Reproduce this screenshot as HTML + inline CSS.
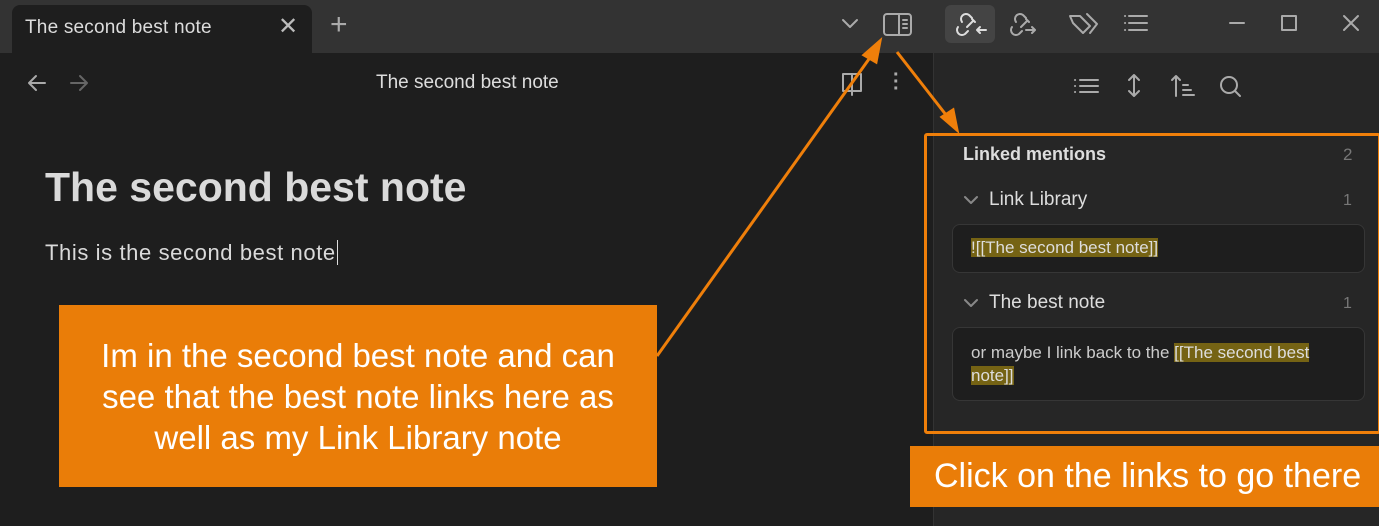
<!DOCTYPE html>
<html><head><style>
body{margin:0;width:1379px;height:526px;background:#1e1e1e;font-family:"Liberation Sans",sans-serif;position:relative;overflow:hidden;color:#dadada}
.a{position:absolute}
</style></head><body>
<div class="a" style="left:0;top:0;width:1379px;height:53px;background:#333"></div>
<div class="a" style="left:933px;top:53px;width:446px;height:473px;background:#262626;border-left:1px solid #333"></div>
<div class="a" style="left:12px;top:5px;width:300px;height:48px;background:#1e1e1e;border-radius:8px 8px 0 0"></div>
<div class="a" style="left:25px;top:17px;font-size:19px;color:#dcdcdc;letter-spacing:0.2px">The second best note</div>
<div class="a" style="left:278px;top:12px;font-size:24px;color:#bbb">✕</div>
<div class="a" style="left:330px;top:8px;font-size:30px;color:#aaa;font-weight:300">+</div>
<div class="a" style="left:945px;top:5px;width:50px;height:38px;background:#444;border-radius:6px"></div>
<svg class="a" style="left:0;top:0" width="1379" height="526" fill="none" stroke="#aaa" stroke-width="2" stroke-linecap="round" stroke-linejoin="round">
<path d="M843 20l7 7 7-7"/>
<rect x="884" y="14" width="27" height="21" rx="3"/><path d="M899 14v21M903 20h4M903 24h4M903 28h4"/>
<g stroke="#ddd"><path d="M962 22a5 5 0 0 1 7-7l3 3M975 22l-3-3M958 27a5 5 0 0 0 7 7l3-3"/><path d="M967 27l6-6M986 30h-9M980 27l-3 3 3 3"/></g>
<path d="M1016 22a5 5 0 0 1 7-7l3 3M1029 22l-3-3M1012 27a5 5 0 0 0 7 7l3-3M1021 27l6-6M1026 30h9M1032 27l3 3-3 3"/>
<path d="M1070 16h10l10 10-7 7-10-10zM1087 14l10 10-7 9"/>
<path d="M1129 16h18M1129 23h18M1129 30h18M1125 16h.1M1125 23h.1M1125 30h.1"/>
<path d="M1230 23h14"/><rect x="1282" y="16" width="14" height="14"/><path d="M1344 16l14 14M1358 16l-14 14"/>
<path d="M45 83H29l7-7M29 83l7 7" /><path d="M71 83h16l-7-7M87 83l-7 7" stroke="#666"/>
<path d="M843 74h18v17h-18zM852 74v21" stroke="#aaa"/>
<path d="M1080 80h18M1080 86h18M1080 92h18M1075 80h.1M1075 86h.1M1075 92h.1"/>
<path d="M1134 75v21M1129 80l5-5 5 5M1129 91l5 5 5-5"/>
<path d="M1176 96V76l-4 4M1176 76l4 4M1183 85h5M1183 90h8M1183 95h11"/>
<circle cx="1229" cy="85" r="8"/><path d="M1235 91l5 5"/>
<path d="M965 197l6 6 6-6M965 300l6 6 6-6M1335 251l7 7 7-7M1335 376l7 7 7-7" stroke="#888"/>
</svg>
<div class="a" style="left:893px;top:72px;font-size:20px;color:#aaa;line-height:7px;font-weight:bold">·<br>·<br>·</div>
<div class="a" style="left:376px;top:72px;font-size:19px;color:#ddd">The second best note</div>
<div class="a" style="left:45px;top:164px;font-size:41px;font-weight:bold;color:#dadada">The second best note</div>
<div class="a" style="left:45px;top:240px;font-size:22px;color:#dadada;letter-spacing:0.6px">This is the second best note<span style="border-left:1px solid #ddd;margin-left:1px"></span></div>
<div class="a" style="left:963px;top:144px;font-size:18px;font-weight:bold;color:#ddd">Linked mentions</div>
<div class="a" style="left:1343px;top:145px;font-size:17px;color:#777">2</div>
<div class="a" style="left:989px;top:189px;font-size:19px;color:#ddd">Link Library</div>
<div class="a" style="left:1343px;top:192px;font-size:16px;color:#777">1</div>
<div class="a" style="left:952px;top:224px;width:411px;height:47px;background:#1e1e1e;border:1px solid #363636;border-radius:8px"></div>
<div class="a" style="left:971px;top:238px;font-size:17px;color:#ddd"><span style="background:#756314">![[The second best note]]</span></div>
<div class="a" style="left:989px;top:292px;font-size:19px;color:#ddd">The best note</div>
<div class="a" style="left:1343px;top:295px;font-size:16px;color:#777">1</div>
<div class="a" style="left:952px;top:327px;width:411px;height:72px;background:#1e1e1e;border:1px solid #363636;border-radius:8px"></div>
<div class="a" style="left:971px;top:341px;width:370px;font-size:17px;line-height:23px;color:#ccc">or maybe I link back to the <span style="background:#756314;color:#ddd">[[The second best note]]</span></div>
<div class="a" style="left:924px;top:133px;width:451px;height:295px;border:3px solid #ef7f0a;border-radius:3px"></div>
<div class="a" style="left:59px;top:305px;width:598px;height:182px;background:#ea7d08;color:#fff;font-size:33px;text-align:center;line-height:41px;display:flex;align-items:center;justify-content:center"><div style="width:560px">Im in the second best note and can see that the best note links here as well as my Link Library note</div></div>
<div class="a" style="left:910px;top:446px;width:480px;height:61px;background:#ea7d08;color:#fff;font-size:34px;line-height:61px;padding-left:24px;white-space:nowrap">Click on the links to go there</div>
<svg class="a" style="left:0;top:0" width="1379" height="526">
<g stroke="#ef7f0a" stroke-width="3" fill="#ef7f0a">
<line x1="657" y1="356" x2="874" y2="52"/><polygon points="880,41 864,55 876,62" />
<line x1="897" y1="52" x2="950" y2="120"/><polygon points="957,130 942,117 953,110"/>
</g></svg>
</body></html>
